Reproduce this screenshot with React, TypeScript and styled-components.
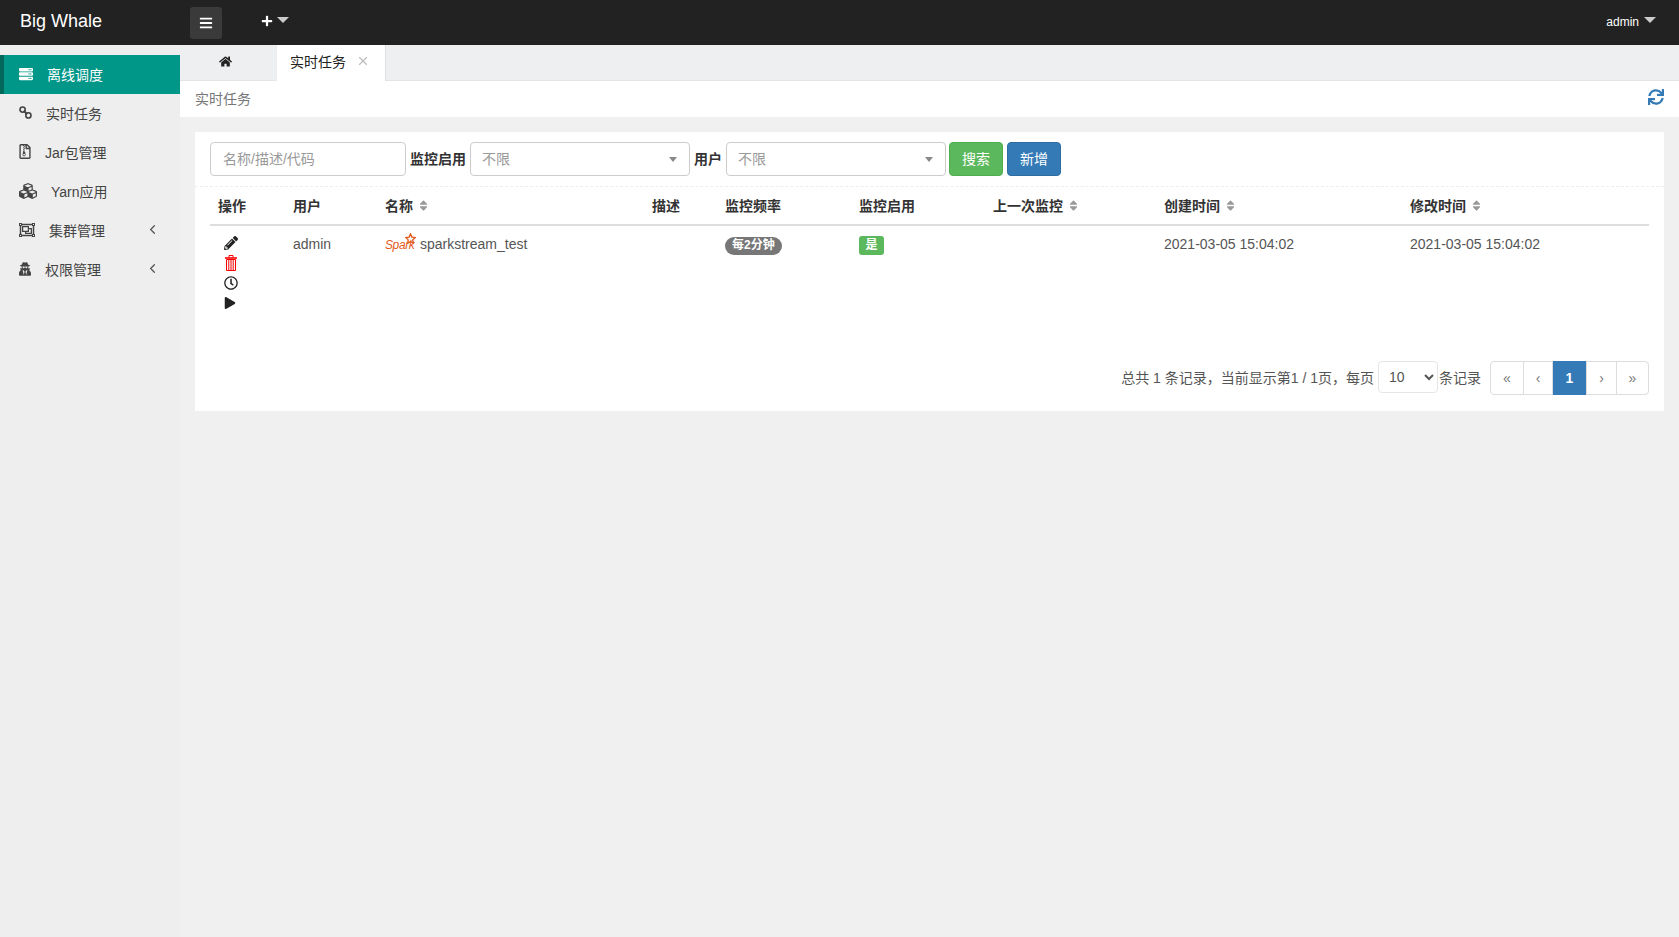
// App.tsx
import styled, { createGlobalStyle } from 'styled-components';
import {
  FaBars, FaPlus, FaHome, FaServer, FaRegFileArchive, FaCubes, FaRegObjectGroup,
  FaUserSecret, FaSync, FaSort, FaPencilAlt, FaRegClock, FaPlay,
} from 'react-icons/fa';
import { FiChevronLeft, FiX } from 'react-icons/fi';

const GlobalStyle = createGlobalStyle`
  html, body { margin: 0; padding: 0; height: 100%; }
  body {
    background: #f0f0f0;
    color: #333;
    font-family: "Liberation Sans", "Noto Sans CJK SC", sans-serif;
    font-size: 14px;
    overflow: hidden;
  }
`;

const Page = styled.div`
  width: 1679px;
  height: 937px;
  display: flex;
  flex-direction: column;
`;

// 顶部导航
const Header = styled.header`
  height: 45px;
  flex: none;
  background: #222;
  color: #fff;
  display: flex;
  align-items: center;
`;

const Brand = styled.div`
  width: 170px;
  padding-left: 20px;
  font-size: 18px;
  margin-top: -2px;
`;

const Toggle = styled.button`
  width: 32px;
  height: 32px;
  padding: 0;
  border: 0;
  border-radius: 3px;
  background: #3a3a3a;
  color: #fff;
  display: flex;
  align-items: center;
  justify-content: center;
  font-size: 14px;
  margin-top: 1px;
`;

const PlusMenu = styled.div`
  margin-left: 39px;
  display: flex;
  align-items: center;
  gap: 4px;
  font-size: 12px;
  margin-top: -3px;
`;

const Caret = styled.span`
  display: inline-block;
  width: 0;
  height: 0;
  margin-top: -3px;
  border-left: 6px solid transparent;
  border-right: 6px solid transparent;
  border-top: 6px solid #ccc;
`;

const UserMenu = styled.div`
  margin-left: auto;
  margin-right: 23px;
  display: flex;
  align-items: center;
  gap: 5px;
  font-size: 12px;
  margin-top: -2px;
`;

const Body = styled.div`
  flex: 1;
  display: flex;
  min-height: 0;
`;

// 左侧菜单
const Sidebar = styled.nav`
  width: 180px;
  flex: none;
  background: #eee;
  padding-top: 10px;
`;

const MenuItem = styled.div<{ $active?: boolean }>`
  height: 39px;
  box-sizing: border-box;
  display: flex;
  align-items: center;
  gap: 14px;
  padding: 0 20px 0 ${(p) => (p.$active ? '15px' : '19px')};
  border-left: ${(p) => (p.$active ? '4px solid #00695c' : '0')};
  background: ${(p) => (p.$active ? '#009688' : 'transparent')};
  color: ${(p) => (p.$active ? '#fff' : '#444')};
`;

const MenuIcon = styled.span<{ $w: number }>`
  width: ${(p) => p.$w}px;
  flex: none;
  display: flex;
  justify-content: center;
  margin-top: -2px;
`;

const MenuText = styled.span`
  margin-top: -2px;
`;

const MenuArrow = styled(FiChevronLeft)`
  margin-left: auto;
  margin-top: -3px;
  font-size: 15px;
  color: #555;
`;

const Main = styled.main`
  flex: 1;
  min-width: 0;
`;

const TabBar = styled.div`
  height: 36px;
  box-sizing: border-box;
  background: #eeeff1;
  border-bottom: 1px solid #e4e4e4;
  display: flex;
  align-items: flex-end;
`;

const HomeTab = styled.div`
  width: 96px;
  height: 35px;
  box-sizing: border-box;
  padding-right: 6px;
  display: flex;
  align-items: center;
  justify-content: center;
  font-size: 13px;
  color: #222;
  margin-bottom: 1px;
`;

const ActiveTab = styled.div`
  width: 110px;
  height: 36px;
  box-sizing: border-box;
  background: #fff;
  border-right: 1px solid #e0e0e0;
  border-left: 1px solid #eee;
  padding: 0 0 5px 13px;
  display: flex;
  align-items: center;
  gap: 10px;
  color: #222;
  margin-bottom: -1px;
  svg { color: #bbb; font-size: 14px; }
`;

const Crumb = styled.div`
  height: 36px;
  box-sizing: border-box;
  background: #fff;
  padding: 0 15px 2px;
  display: flex;
  align-items: center;
  justify-content: space-between;
  color: #777;
  svg { color: #337ab7; font-size: 16px; margin-top: -2px; }
`;

const Card = styled.section`
  margin: 15px;
  background: #fff;
  padding: 0 15px 16px;
`;

const Filter = styled.div`
  display: flex;
  align-items: center;
  gap: 4px;
  padding: 10px 0 10px 15px;
  margin: 0 -15px;
  border-bottom: 1px dashed #eee;
`;

const SearchInput = styled.input`
  width: 196px;
  height: 34px;
  box-sizing: border-box;
  border: 1px solid #ccc;
  border-radius: 4px;
  padding: 0 12px;
  font: inherit;
  &::placeholder { color: #999; opacity: 1; }
`;

const FilterLabel = styled.label`
  font-weight: bold;
  margin-top: -2px;
`;

const FakeSelect = styled.div`
  width: 220px;
  height: 34px;
  box-sizing: border-box;
  border: 1px solid #ccc;
  border-radius: 4px;
  padding: 0 12px 2px 11px;
  display: flex;
  align-items: center;
  justify-content: space-between;
  color: #999;
`;

const SelectCaret = styled.span`
  width: 0;
  height: 0;
  margin: 2px 0 0 0;
  border-left: 4px solid transparent;
  border-right: 4px solid transparent;
  border-top: 5px solid #888;
`;

const ButtonGroup = styled.div`
  display: flex;
  gap: 4px;
  margin-left: -1px;
`;

const Button = styled.button<{ $color: string; $border: string }>`
  width: 54px;
  height: 34px;
  padding: 0 0 2px;
  font: inherit;
  color: #fff;
  background: ${(p) => p.$color};
  border: 1px solid ${(p) => p.$border};
  border-radius: 4px;
`;

const Table = styled.table`
  width: 1439px;
  table-layout: fixed;
  border-collapse: collapse;
`;

const Th = styled.th<{ $w: number }>`
  width: ${(p) => p.$w}px;
  height: 38px;
  box-sizing: border-box;
  padding: 0 8px 2px;
  text-align: left;
  border-bottom: 2px solid #ddd;
  white-space: nowrap;
  svg { color: #999; font-size: 13px; margin-left: 4px; vertical-align: -1px; }
`;

const Td = styled.td`
  padding: 8px;
  vertical-align: top;
  line-height: 20px;
  color: #555;
  white-space: nowrap;
`;

const Actions = styled.div`
  display: flex;
  flex-direction: column;
  margin-top: -1px;
  padding-left: 6px;
  color: #222;
  font-size: 14px;
`;

const ActionIcon = styled.span`
  height: 20px;
  display: flex;
  align-items: center;
  color: #222;
`;

const NameCell = styled.span`
  display: inline-flex;
  align-items: center;
  gap: 4px;
`;

const SparkLogo = styled.span`
  position: relative;
  display: inline-block;
  width: 31px;
  height: 20px;
  color: #e25a1c;
  font-size: 12px;
  font-style: italic;
  line-height: 23px;
  letter-spacing: -0.4px;
  svg { position: absolute; right: 0; top: -1px; }
`;

const Pill = styled.span`
  display: inline-block;
  height: 18px;
  line-height: 17px;
  padding: 0 7px;
  border-radius: 9px;
  background: #777;
  color: #fff;
  font-size: 12px;
  font-weight: bold;
`;

const Label = styled.span`
  display: inline-block;
  height: 19px;
  line-height: 18px;
  padding: 0 6.5px;
  border-radius: 3px;
  background: #5cb85c;
  color: #fff;
  font-size: 12px;
  font-weight: bold;
`;

const Footer = styled.div`
  margin-top: 40px;
  display: flex;
  align-items: center;
  justify-content: flex-end;
  color: #555;
  height: 34px;
`;

const FooterText = styled.span`
  margin-top: -2px;
`;

const PageSize = styled.select`
  width: 60px;
  height: 32px;
  margin: 0 1px 2px 4px;
  padding: 0 6px;
  font: inherit;
  color: #555;
  background: #fff;
  border: 1px solid #e5e5e5;
  border-radius: 4px;
`;

const Pager = styled.div`
  display: flex;
  margin-left: 9px;
  border: 1px solid #ddd;
  border-radius: 4px;
  height: 32px;
`;

const PagerItem = styled.span<{ $w: number; $active?: boolean }>`
  width: ${(p) => p.$w}px;
  display: flex;
  align-items: center;
  justify-content: center;
  box-sizing: border-box;
  border-left: 1px solid #ddd;
  color: ${(p) => (p.$active ? '#fff' : '#777')};
  background: ${(p) => (p.$active ? '#337ab7' : 'transparent')};
  font-weight: ${(p) => (p.$active ? 'bold' : 'normal')};
  margin: ${(p) => (p.$active ? '-1px 0' : '0')};
  &:first-child { border-left: 0; }
`;

const ChainIcon = () => (
  <svg width="13" height="13" viewBox="0 0 13 13" fill="none" stroke="currentColor" strokeWidth="1.6">
    <circle cx="3.6" cy="3.6" r="2.6" />
    <circle cx="9.4" cy="9.4" r="2.6" />
    <path d="M4.8 4.8l3.4 3.4" strokeWidth="2" />
  </svg>
);

const TrashIcon = () => (
  <svg width="14" height="16" viewBox="0 0 14 16" fill="none" stroke="#f00" strokeWidth="1">
    <path d="M5 2.5v-2h4v2" />
    <path d="M1 3h12" strokeWidth="1.6" />
    <path d="M2.5 4.5h9v11h-9z" />
    <path d="M4.8 5v10M7 5v10M9.2 5v10" />
  </svg>
);

const menus = [
  { icon: <FaServer size={14} />, w: 14, label: '离线调度', active: true },
  { icon: <ChainIcon />, w: 13, label: '实时任务' },
  { icon: <FaRegFileArchive size={15} />, w: 12, label: 'Jar包管理' },
  { icon: <FaCubes size={18} />, w: 18, label: 'Yarn应用' },
  { icon: <FaRegObjectGroup size={16} />, w: 16, label: '集群管理', arrow: true },
  { icon: <FaUserSecret size={14} />, w: 12, label: '权限管理', arrow: true },
];

const columns = [
  { title: '操作', w: 75 },
  { title: '用户', w: 92 },
  { title: '名称', w: 267, sort: true },
  { title: '描述', w: 73 },
  { title: '监控频率', w: 134 },
  { title: '监控启用', w: 134 },
  { title: '上一次监控', w: 171, sort: true },
  { title: '创建时间', w: 246, sort: true },
  { title: '修改时间', w: 247, sort: true },
];

const pages = [
  { text: '«', w: 32 },
  { text: '‹', w: 29 },
  { text: '1', w: 34, active: true },
  { text: '›', w: 30 },
  { text: '»', w: 32 },
];

export default function App() {
  return (
    <Page>
      <GlobalStyle />
      <Header>
        <Brand>Big Whale</Brand>
        <Toggle><FaBars /></Toggle>
        <PlusMenu><FaPlus /><Caret /></PlusMenu>
        <UserMenu>admin <Caret /></UserMenu>
      </Header>
      <Body>
        <Sidebar>
          {menus.map((m) => (
            <MenuItem key={m.label} $active={m.active}>
              <MenuIcon $w={m.w}>{m.icon}</MenuIcon>
              <MenuText>{m.label}</MenuText>
              {m.arrow && <MenuArrow />}
            </MenuItem>
          ))}
        </Sidebar>
        <Main>
          <TabBar>
            <HomeTab><FaHome /></HomeTab>
            <ActiveTab>实时任务<FiX /></ActiveTab>
          </TabBar>
          <Crumb>实时任务<FaSync /></Crumb>
          <Card>
            <Filter>
              <SearchInput placeholder="名称/描述/代码" />
              <FilterLabel>监控启用</FilterLabel>
              <FakeSelect>不限<SelectCaret /></FakeSelect>
              <FilterLabel>用户</FilterLabel>
              <FakeSelect>不限<SelectCaret /></FakeSelect>
              <ButtonGroup>
                <Button $color="#5cb85c" $border="#4cae4c">搜索</Button>
                <Button $color="#337ab7" $border="#2e6da4">新增</Button>
              </ButtonGroup>
            </Filter>
            <Table>
              <thead>
                <tr>
                  {columns.map((c) => (
                    <Th key={c.title} $w={c.w}>{c.title}{c.sort && <FaSort />}</Th>
                  ))}
                </tr>
              </thead>
              <tbody>
                <tr>
                  <Td>
                    <Actions>
                      <ActionIcon><FaPencilAlt /></ActionIcon>
                      <ActionIcon><TrashIcon /></ActionIcon>
                      <ActionIcon><FaRegClock /></ActionIcon>
                      <ActionIcon><FaPlay size={12} /></ActionIcon>
                    </Actions>
                  </Td>
                  <Td>admin</Td>
                  <Td>
                    <NameCell>
                      <SparkLogo>
                        Spark
                        <svg width="11" height="11" viewBox="0 0 24 24" fill="none" stroke="#e25a1c" strokeWidth="3">
                          <path d="M12 2l3 7 7 1-5 5 1 7-6-3-6 3 1-7-5-5 7-1z" />
                        </svg>
                      </SparkLogo>
                      sparkstream_test
                    </NameCell>
                  </Td>
                  <Td />
                  <Td><Pill>每2分钟</Pill></Td>
                  <Td><Label>是</Label></Td>
                  <Td />
                  <Td>2021-03-05 15:04:02</Td>
                  <Td>2021-03-05 15:04:02</Td>
                </tr>
              </tbody>
            </Table>
            <Footer>
              <FooterText>总共 1 条记录，当前显示第1 / 1页，每页</FooterText>
              <PageSize defaultValue="10">
                <option value="10">10</option>
                <option value="20">20</option>
              </PageSize>
              <FooterText>条记录</FooterText>
              <Pager>
                {pages.map((p) => (
                  <PagerItem key={p.text} $w={p.w} $active={p.active}>{p.text}</PagerItem>
                ))}
              </Pager>
            </Footer>
          </Card>
        </Main>
      </Body>
    </Page>
  );
}
